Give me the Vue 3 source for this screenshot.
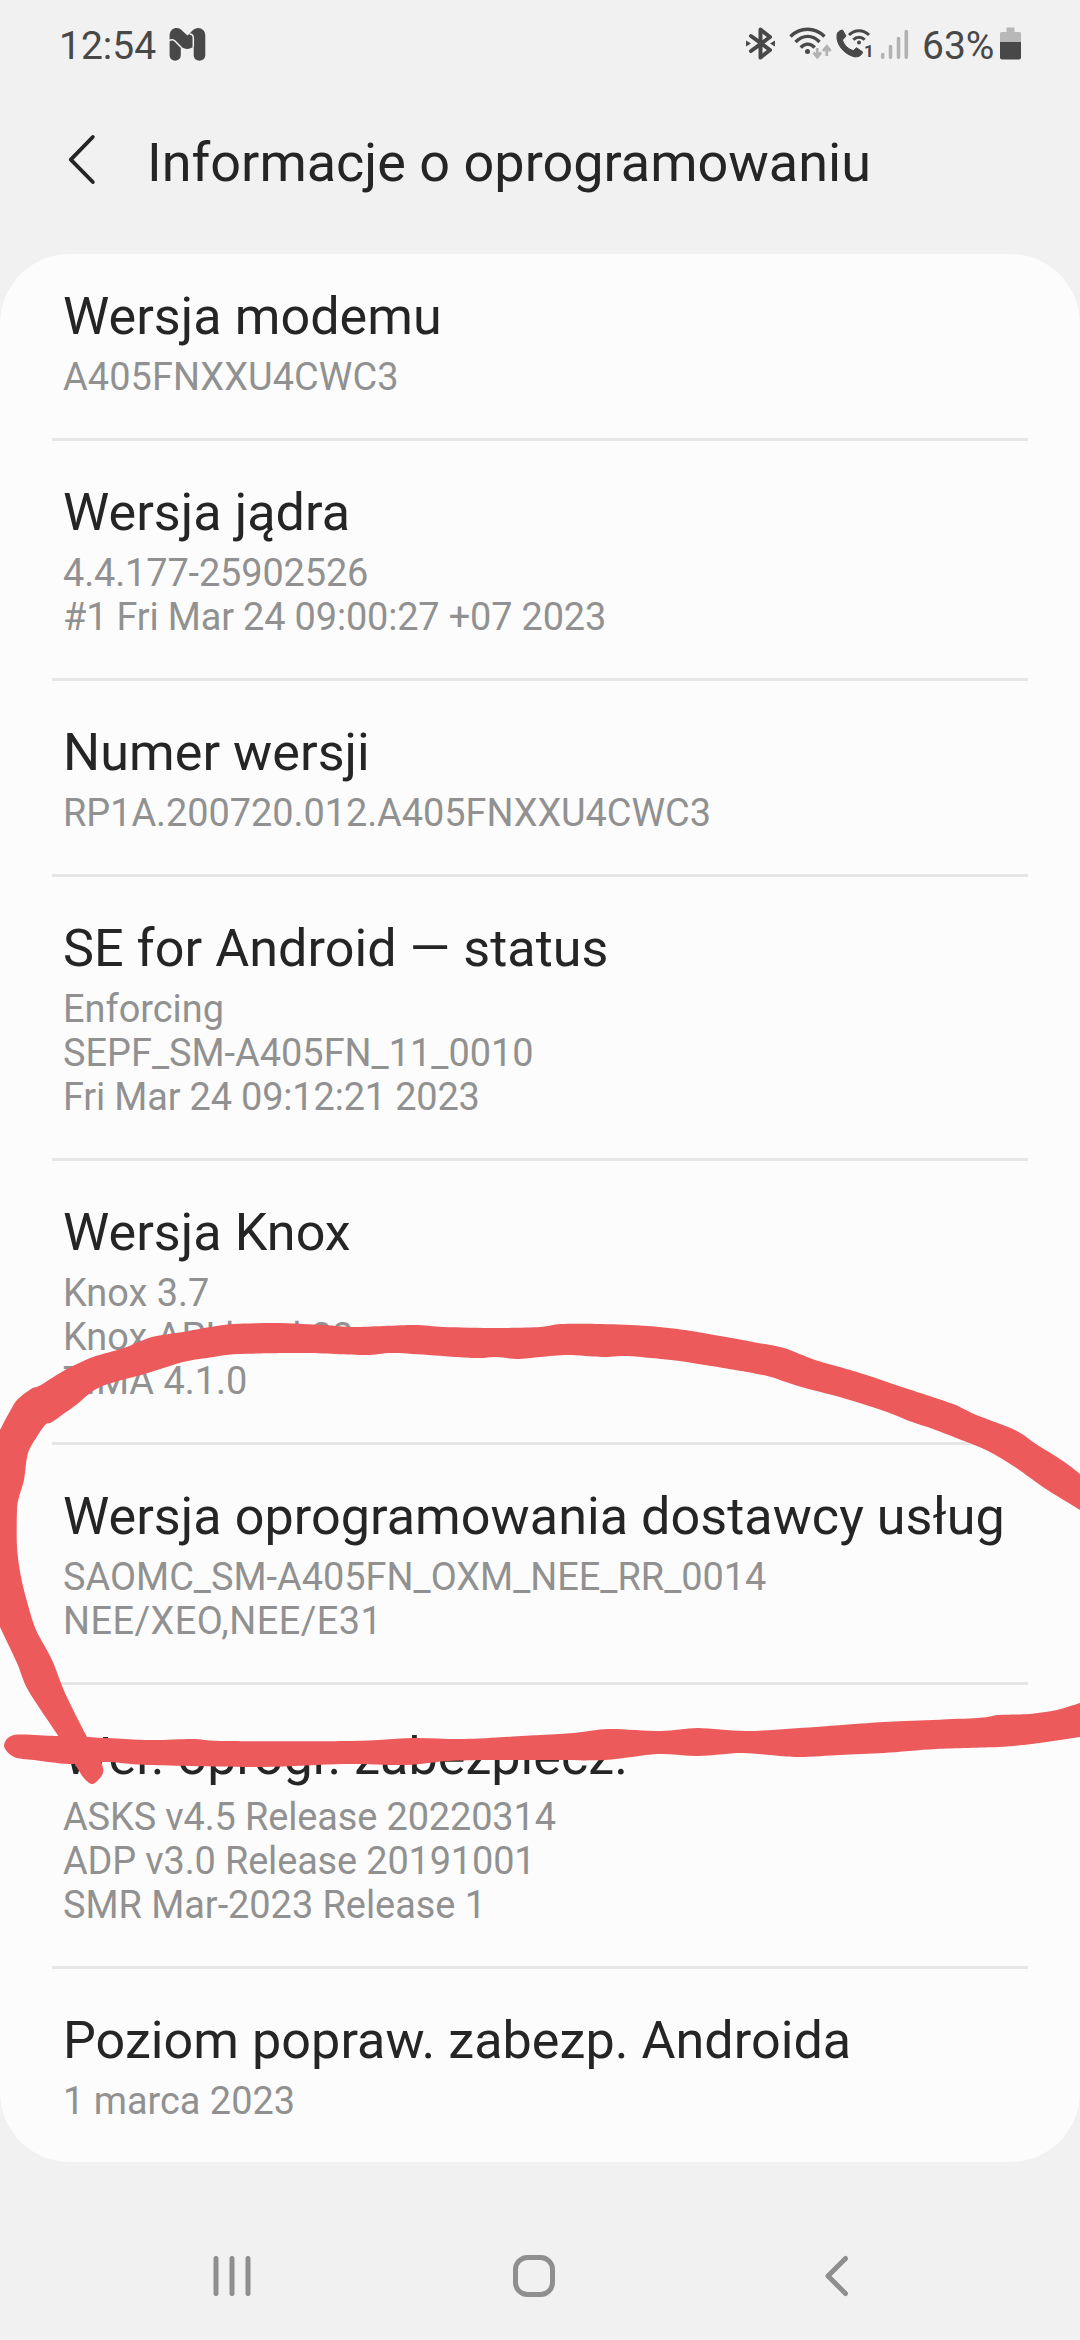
<script setup>
// `track` is the letter spacing of a line in px.
const items = [
  { title: 'Wersja modemu', lines: [{ text: 'A405FNXXU4CWC3', track: 0.08 }] },
  { title: 'Wersja jądra', lines: [{ text: '4.4.177-25902526', track: -0.13 }, { text: '#1 Fri Mar 24 09:00:27 +07 2023', track: -0.16 }] },
  { title: 'Numer wersji', lines: [{ text: 'RP1A.200720.012.A405FNXXU4CWC3', track: -0.05 }] },
  { title: 'SE for Android — status', lines: [{ text: 'Enforcing', track: 0 }, { text: 'SEPF_SM-A405FN_11_0010', track: 0 }, { text: 'Fri Mar 24 09:12:21 2023', track: -0.16 }] },
  { title: 'Wersja Knox', lines: [{ text: 'Knox 3.7', track: 0 }, { text: 'Knox API level 33', track: 0 }, { text: 'TIMA 4.1.0', track: 0 }] },
  { title: 'Wersja oprogramowania dostawcy usług', lines: [{ text: 'SAOMC_SM-A405FN_OXM_NEE_RR_0014', track: 0 }, { text: 'NEE/XEO,NEE/E31', track: 0.45 }] },
  { title: 'Wer. oprogr. zabezpiecz.', lines: [{ text: 'ASKS v4.5 Release 20220314', track: -0.12 }, { text: 'ADP v3.0 Release 20191001', track: -0.14 }, { text: 'SMR Mar-2023 Release 1', track: -0.03 }] },
  { title: 'Poziom popraw. zabezp. Androida', lines: [{ text: '1 marca 2023', track: 0 }] },
]

// Outlines of the two freehand marker strokes, in screen coordinates.
const loop = [
  [-12, 1455], [0, 1430], [9, 1413], [17, 1400], [31, 1389], [41, 1385], [65, 1370], [93, 1357], [124, 1348],
  [152, 1337], [183, 1332], [210, 1327], [234, 1324], [275, 1323], [324, 1325], [355, 1327], [413, 1325],
  [444, 1327], [496, 1328], [540, 1327], [561, 1324], [602, 1324], [647, 1326], [685, 1330], [726, 1337],
  [753, 1342], [784, 1348], [815, 1360], [857, 1372], [905, 1388], [953, 1404], [974, 1414], [1008, 1427],
  [1022, 1434], [1036, 1444], [1063, 1461], [1080, 1474], [1100, 1490], [1100, 1524], [1080, 1510],
  [1046, 1489], [1015, 1467], [988, 1451], [964, 1441], [933, 1429], [912, 1422], [884, 1411], [843, 1398],
  [798, 1386], [771, 1377], [747, 1372], [705, 1365], [671, 1360], [626, 1356], [602, 1357], [568, 1355],
  [540, 1357], [517, 1359], [496, 1357], [472, 1358], [396, 1353], [365, 1355], [303, 1353], [238, 1354],
  [207, 1358], [183, 1362], [148, 1373], [100, 1387], [76, 1405], [52, 1422], [46, 1424], [38, 1435],
  [28, 1453], [24, 1480], [19, 1497], [17, 1510], [17, 1547], [21, 1577], [28, 1605], [36, 1630], [52, 1660],
  [65, 1693], [86, 1735], [100, 1760], [103, 1773], [93, 1784], [83, 1777], [71, 1757], [57, 1734],
  [28, 1690], [17, 1663], [0, 1627], [-12, 1600],
]
const underline = [
  [14, 1735], [55, 1736], [86, 1737], [148, 1740], [193, 1739], [224, 1741], [351, 1741], [413, 1738],
  [465, 1739], [540, 1735], [574, 1733], [609, 1729], [661, 1731], [698, 1728], [747, 1731], [815, 1727],
  [884, 1722], [977, 1718], [998, 1715], [1029, 1714], [1057, 1710], [1080, 1703], [1100, 1697],
  [1100, 1733], [1080, 1737], [1032, 1744], [998, 1747], [936, 1749], [884, 1753], [840, 1755], [795, 1757],
  [743, 1753], [698, 1756], [657, 1754], [605, 1760], [540, 1760], [489, 1760], [448, 1761], [406, 1765],
  [344, 1764], [262, 1767], [148, 1765], [107, 1762], [69, 1764], [34, 1760], [14, 1757], [4, 1746],
]

// Closed Catmull-Rom spline through the points, as cubic Béziers.
function smooth(p) {
  const n = p.length
  let d = `M${p[0]}`
  for (let i = 0; i < n; i++) {
    const a = p[(i - 1 + n) % n]
    const b = p[i]
    const c = p[(i + 1) % n]
    const e = p[(i + 2) % n]
    const k = 7
    d += `C${b[0] + (c[0] - a[0]) / k} ${b[1] + (c[1] - a[1]) / k} ${c[0] - (e[0] - b[0]) / k} ${c[1] - (e[1] - b[1]) / k} ${c[0]} ${c[1]}`
  }
  return d + 'Z'
}
const strokes = [smooth(loop), smooth(underline)]
</script>

<template>
  <div class="screen">
    <header class="status">
      <span class="clock">12:54</span>
      <svg class="mail" width="40" height="40" viewBox="168 25 40 40">
        <path fill="#484848" d="M169.600 36C169.600 27 179 26 182.500 31L187.500 35.500L192.500 30.500C197 25.500 205.300 28 205.300 35.500V55C205.300 62.500 193.700 62.500 193.700 55V46.500C190 49.500 185 50 180.800 46.500V55C180.800 62.500 169.600 62.500 169.600 55Z" />
        <path fill="none" stroke="#f1f1f1" stroke-width="1.500" d="M169 41C171 39 174 39.500 175.500 41.500L181 47.200M189.500 34C192 34 193.300 35.500 193.300 38V47" />
      </svg>
      <div class="indicators">
        <svg width="300" height="50" viewBox="740 20 300 50">
          <g fill="none" stroke="#484848" stroke-linejoin="round" stroke-linecap="round">
            <path stroke-width="4" d="M751 36L770 50L760.500 57.500V29.500L770 37L751 51" />
          </g>
          <path fill="#484848" d="M746 40.500L751 43.500L746 46.500ZM775 40.500L770 43.500L775 46.500Z" />
          <g fill="none" stroke="#484848" stroke-width="3.400">
            <path d="M790.500 36.500C800 26.800 815 26.800 824.500 36.500" />
            <path d="M795.500 42C803 34.500 812.500 34.500 819.500 42" />
            <path d="M800.700 47.500C805 43 810.500 43 814.700 47.500" />
          </g>
          <circle cx="807.500" cy="51.500" r="2.500" fill="#484848" />
          <g fill="none" stroke="#b2b2b2" stroke-width="2.800">
            <path d="M817.300 48V56.500M813.500 52.500L817.300 57L821.100 52.500M826.800 56V47.500M823 51L826.800 46.500L830.600 51" />
          </g>
          <path fill="#484848" stroke="#484848" stroke-width="1" stroke-linejoin="round" d="M837 35C837 32 840.500 30 842.500 30L846 36L842.500 40C844 45 848.500 49.500 853.500 50.500L856.500 47.700L862.700 52C861.500 56 857.500 57.500 854 56.700C843.500 54 836 44 837 35Z" />
          <g fill="none" stroke="#484848" stroke-width="3">
            <path d="M849 35C854.500 29.200 863.500 29.200 869 35" />
            <path d="M853.300 39.700C856.500 36.300 861.500 36.300 864.700 39.700" />
          </g>
          <circle cx="859" cy="42.500" r="2" fill="#484848" />
          <text x="864" y="57.400" class="sim">1</text>
          <g fill="none" stroke="#b2b2b2" stroke-width="3.600" stroke-linecap="round">
            <path d="M882.700 54.500V57.200M890.500 46.500V57.200M898.500 38.500V57.200M906.300 31.500V57.200" />
          </g>
          <text x="922" y="59" class="percent">63%</text>
          <path fill="#b8b8b8" d="M1006.500 27.500H1014.500V32H1019.500Q1021 32 1021 33.500V42H1000V33.500Q1000 32 1001.500 32H1006.500Z" />
          <path fill="#484848" d="M1000 42H1021V57.500Q1021 59.500 1019 59.500H1002Q1000 59.500 1000 57.500Z" />
        </svg>
      </div>
    </header>

    <div class="appbar">
      <svg class="back" width="40" height="60" viewBox="62 130 40 60">
        <path fill="none" stroke="#252525" stroke-width="3.900" stroke-linecap="round" stroke-linejoin="round" d="M92.800 137L70.800 159.700L92.800 182" />
      </svg>
      <h1>Informacje o oprogramowaniu</h1>
    </div>

    <main class="card">
      <section v-for="item in items" :key="item.title" class="item">
        <h2>{{ item.title }}</h2>
        <p v-for="line in item.lines" :key="line.text" :style="{ letterSpacing: line.track + 'px' }">{{ line.text }}</p>
      </section>
    </main>

    <nav class="nav">
      <svg width="1080" height="178" viewBox="0 2162 1080 178" fill="none" stroke="#8f8f8f" stroke-width="5" stroke-linecap="round" stroke-linejoin="round">
        <path d="M216 2258.500V2293.500M232 2258.500V2293.500M248 2258.500V2293.500" />
        <rect x="515.500" y="2257.500" width="37" height="37" rx="12" />
        <path d="M845.500 2258.500L828 2276L845.500 2293.500" />
      </svg>
    </nav>

    <svg class="marker" width="1080" height="2340" viewBox="0 0 1080 2340">
      <path v-for="d in strokes" :key="d" :d="d" />
    </svg>
  </div>
</template>

<style>
body {
  margin: 0;
  background: #f1f1f1;
}
</style>

<style scoped>
.screen {
  position: relative;
  width: 1080px;
  height: 2340px;
  overflow: hidden;
  display: flex;
  flex-direction: column;
  background: #f1f1f1;
  font-family: Roboto, sans-serif;
  color: #252525;
}
svg {
  display: block;
  flex: none;
}
.status {
  height: 90px;
  display: flex;
  align-items: flex-start;
  color: #484848;
}
.clock {
  width: 109px;
  padding: 23px 0 0 59px;
  font-size: 39px;
  line-height: 46px;
}
.mail {
  margin-top: 25px;
}
.indicators {
  margin: 20px 40px 0 auto;
}
.percent {
  font-size: 39px;
  fill: #484848;
}
.sim {
  font-size: 17px;
  font-weight: 700;
  fill: #484848;
}
.appbar {
  height: 164px;
  display: flex;
  align-items: flex-start;
}
.back {
  margin: 40px 45px 0 62px;
}
h1 {
  margin: 41px 0 0;
  font-size: 54px;
  line-height: 64px;
  font-weight: 400;
}
.card {
  flex: none;
  height: 1908px;
  border-radius: 70px;
  background: #fcfcfc;
}
.item {
  margin: 0 52px;
  padding: 41px 0 39px 11px;
  border-bottom: 3px solid #e6e6e6;
}
.item:first-child {
  padding-top: 32px;
}
.item:last-child {
  border-bottom: 0;
}
h2 {
  margin: 0 0 7px;
  font-size: 52.100px;
  line-height: 62px;
  font-weight: 400;
  letter-spacing: 0.05px;
  white-space: nowrap;
}
p {
  margin: 0;
  font-size: 37.900px;
  line-height: 44px;
  color: #919191;
  white-space: nowrap;
}
.marker {
  position: absolute;
  inset: 0;
  pointer-events: none;
  fill: #ec5a5b;
}
</style>
